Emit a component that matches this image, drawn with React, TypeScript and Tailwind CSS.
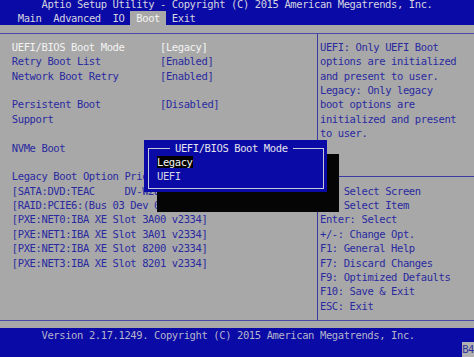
import React from "react";

const row = "h-[14.4px] leading-[14.4px]";

const settings: { label: string; value?: string; selected?: boolean }[] = [
  { label: "UEFI/BIOS Boot Mode", value: "[Legacy]", selected: true },
  { label: "Retry Boot List", value: "[Enabled]" },
  { label: "Network Boot Retry", value: "[Enabled]" },
  { label: "" },
  { label: "Persistent Boot", value: "[Disabled]" },
  { label: "Support" },
  { label: "" },
  { label: "NVMe Boot" },
  { label: "" },
  { label: "Legacy Boot Option Priorities" },
  { label: "[SATA:DVD:TEAC     DV-W28S-V     1.0A]" },
  { label: "[RAID:PCIE6:(Bus 03 Dev 00)PCI RAID Adapter]" },
  { label: "[PXE:NET0:IBA XE Slot 3A00 v2334]" },
  { label: "[PXE:NET1:IBA XE Slot 3A01 v2334]" },
  { label: "[PXE:NET2:IBA XE Slot 8200 v2334]" },
  { label: "[PXE:NET3:IBA XE Slot 8201 v2334]" },
];

const help = [
  "UEFI: Only UEFI Boot",
  "options are initialized",
  "and present to user.",
  "Legacy: Only legacy",
  "boot options are",
  "initialized and present",
  "to user.",
];

const keys = [
  "\u2192\u2190: Select Screen",
  "\u2191\u2193: Select Item",
  "Enter: Select",
  "+/-: Change Opt.",
  "F1: General Help",
  "F7: Discard Changes",
  "F9: Optimized Defaults",
  "F10: Save & Exit",
  "ESC: Exit",
];

const tabs = ["Main", "Advanced", "IO", "Boot", "Exit"];

export default function App() {
  return (
    <div className="relative w-[474px] h-[357px] overflow-hidden bg-[#a8a8a8] font-['DejaVu_Sans_Mono','Liberation_Mono',monospace] text-[10.5px] tracking-[-0.397px] whitespace-pre">
      <div className="mt-[-3.4px] flex flex-col">
        <header className="h-[28.8px] bg-[#0a0aa6] flex flex-col text-[#d4d4e0]">
          <div className={`${row} text-center`}>
            Aptio Setup Utility - Copyright (C) 2015 American Megatrends, Inc.
          </div>
          <div className={`${row} flex pl-[11.85px]`}>
            {tabs.map((t) => (
              <span
                key={t}
                className={t === "Boot" ? "bg-[#a8a8a8] text-[#f4f4f4]" : ""}
              >
                {` ${t} `}
              </span>
            ))}
          </div>
        </header>

        <div className="h-[7.2px]" />

        <main className="h-[288px] border-y border-[#4a4aa8] flex">
          <section className="w-[317px] pt-[6.2px] pl-[11.85px] flex flex-col text-[#2a2aa0]">
            {settings.map((s, i) => (
              <div key={i} className={`${row} flex ${s.selected ? "text-[#f4f4f4]" : ""}`}>
                <span className="w-[148.15px] shrink-0">{s.label}</span>
                {s.value && <span>{s.value}</span>}
              </div>
            ))}
          </section>
          <section className="flex-1 border-l border-[#3a3aa0] pt-[6.2px] flex flex-col text-[#2a2aa0]">
            {help.map((h, i) => (
              <div key={i} className={`${row} pl-[2px]`}>
                {h}
              </div>
            ))}
            <div className={row} />
            <div className={row} />
            <div className="h-[14.4px] flex items-center">
              <div className="h-px w-full bg-[#3a3aa0]" />
            </div>
            {keys.map((k, i) => (
              <div key={i} className={`${row} pl-[2px]`}>
                {k}
              </div>
            ))}
          </section>
        </main>

        <div className="h-[7.2px]" />

        <footer className="h-[28.8px] bg-[#0a0aa6] flex flex-col text-[#b4b4cc]">
          <div className={`${row} pl-[41.5px]`}>
            Version 2.17.1249. Copyright (C) 2015 American Megatrends, Inc.
          </div>
          <div className={`${row} flex justify-end`}>
            <span className="bg-[#b0b0b0] text-[#3030a0]">B4</span>
          </div>
        </footer>
      </div>

      {/* popup shadow */}
      <div className="absolute left-[157px] top-[154px] w-[182px] h-[58px] bg-[#050505]" />

      {/* popup */}
      <div className="absolute left-[144px] top-[140px] w-[183px] h-[52px] bg-[#0a0aa6] flex flex-col pt-[0.6px]">
        <div className="absolute left-[4px] top-[8px] right-[3px] bottom-[3px] border border-[#c8c8dc]" />
        <div className={`${row} relative pl-[26px]`}>
          <span className="bg-[#0a0aa6] px-[5px] text-[#e4e4ee]">UEFI/BIOS Boot Mode</span>
        </div>
        <div className={`${row} relative pl-[13px]`}>
          <span className="bg-[#000000] text-[#f4f4f4]">Legacy</span>
        </div>
        <div className={`${row} relative pl-[13px] text-[#d4d4e4]`}>UEFI</div>
      </div>
    </div>
  );
}
